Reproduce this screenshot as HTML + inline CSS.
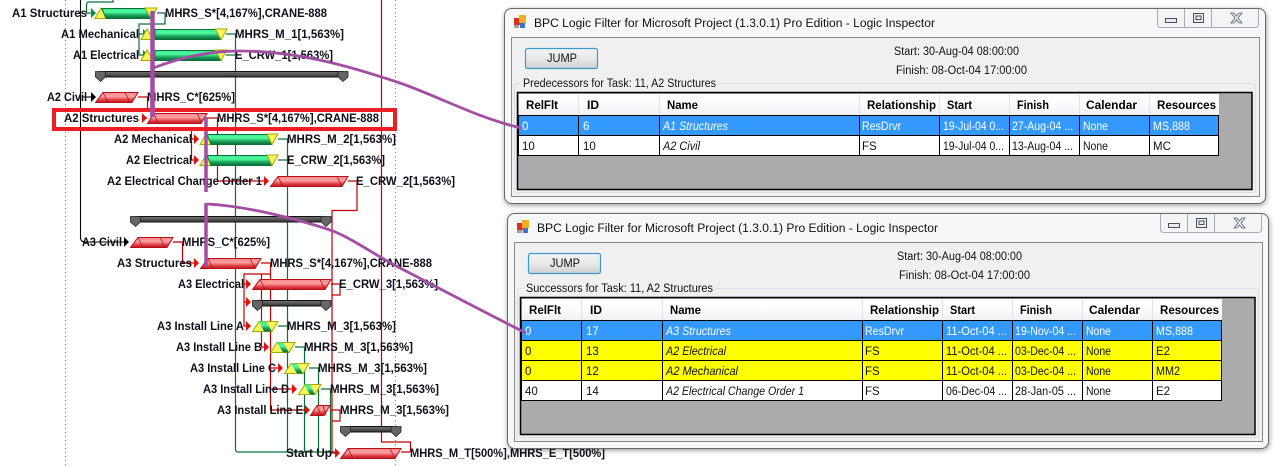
<!DOCTYPE html>
<html><head><meta charset="utf-8"><style>
html,body{margin:0;padding:0;background:#fff;width:1278px;height:467px;overflow:hidden}
svg{display:block}
.g{font:bold 11.5px "Liberation Sans",sans-serif;fill:#10101c}
.w{font:11.5px "Liberation Sans",sans-serif;fill:#111}
.h{font:bold 11.5px "Liberation Sans",sans-serif;fill:#000}
.i{font-style:italic}
.s{fill:#fff}
.rd{stroke:#c00000;fill:none;stroke-width:1.2}
.gr{stroke:#0b7038;fill:none;stroke-width:1.2}
.gb{fill:url(#gg);stroke:#0b7038;stroke-width:1}
.rb{fill:url(#rg);stroke:#b80f17;stroke-width:1}
.ln{fill:none;stroke:#b80f17;stroke-width:.8}
.yt{fill:#f6f65a;stroke:#a8a800;stroke-width:1}
.ra{fill:#e60d0d}
.ga{fill:#0b8a40}
.sb{fill:url(#sg);stroke:#111;stroke-width:1}
.sp{fill:#666;stroke:#222;stroke-width:.8}
.p{fill:none;stroke:#a34ea3}
</style></head><body>
<svg width="1278" height="467" viewBox="0 0 1278 467" xmlns="http://www.w3.org/2000/svg">
<defs>
<linearGradient id="gg" x1="0" y1="0" x2="0" y2="1"><stop offset="0" stop-color="#3fe890"/><stop offset=".35" stop-color="#4dfb9d"/><stop offset=".7" stop-color="#189a58"/><stop offset="1" stop-color="#0a6e38"/></linearGradient>
<linearGradient id="rg" x1="0" y1="0" x2="0" y2="1"><stop offset="0" stop-color="#f58a8c"/><stop offset=".4" stop-color="#fba0a2"/><stop offset=".75" stop-color="#dd3a40"/><stop offset="1" stop-color="#b81a20"/></linearGradient>
<linearGradient id="sg" x1="0" y1="0" x2="0" y2="1"><stop offset="0" stop-color="#777"/><stop offset="1" stop-color="#333"/></linearGradient>
<linearGradient id="hd" x1="0" y1="0" x2="0" y2="1"><stop offset="0" stop-color="#fff"/><stop offset=".5" stop-color="#fcfcfc"/><stop offset="1" stop-color="#eef0f2"/></linearGradient>
<linearGradient id="bt" x1="0" y1="0" x2="0" y2="1"><stop offset="0" stop-color="#f4f4f4"/><stop offset=".5" stop-color="#e8e8e8"/><stop offset="1" stop-color="#cfcfcf"/></linearGradient>
<filter id="sh" x="-3%" y="-8%" width="106%" height="116%"><feGaussianBlur stdDeviation="3"/></filter>
</defs>

<!-- dotted guides -->
<path d="M65.5 0V467M395.5 0V467" stroke="#888" stroke-width="1" stroke-dasharray="1 3" fill="none"/>

<!-- long connectors -->
<path d="M80.5 0V238Q81 242 85 242H128" fill="none" stroke="#000" stroke-width="1.1"/>
<path d="M83 97H92" fill="none" stroke="#000" stroke-width="1.1"/>
<path class="gr" d="M113 0V2H89Q86.500 2 86.500 5V13H92"/>
<path class="gr" d="M157 13H165V24H139V55H143M139 34H143"/>
<path class="gr" d="M226 34H235.500V449Q235.500 452 238 452H335M226 55H235.500"/>
<path class="gr" d="M278 139H287.500V452M278 160H287.500"/>
<path class="gr" d="M278 326H287M295 347H304.500V452M309 368H318.500V452M321 389H330.500V452"/>
<path class="rd" d="M138 97H147.500V108M147 118H143"/>
<path class="rd" d="M207 118H217.500V181H268M192 130H217M191.500 130V160H198M191.500 139H198"/>
<path class="rd" d="M348 181H357V210.500H332V453H336"/>
<path class="rd" d="M173 242H182.500V263H196"/>
<path class="rd" d="M261 263H270.500V410H306M270.500 274H244V326H249M244 284H249M244 302H249M261.500 274V347H267M270 368H280M270 389H294"/>
<path class="rd" d="M331 284H340V295H332M330 410H340V421H332"/>
<path class="rd" d="M381.500 0V442H410.500V452M401 452H410"/>

<!-- arrows -->
<path class="ga" d="M91 8l5 5-5 5zM143 29l5 5-5 5zM143 50l5 5-5 5z"/>
<path d="M91 92l5 5-5 5zM124 237l5 5-5 5z" fill="#000"/>
<path class="ra" d="M142 113l5 5-5 5zM194 134l5 5-5 5zM194 155l5 5-5 5zM264 176l5 5-5 5zM194 258l5 5-5 5zM246 279l5 5-5 5zM246 297l5 5-5 5zM246 321l5 5-5 5zM264 342l5 5-5 5zM278 363l5 5-5 5zM292 384l5 5-5 5zM305 405l5 5-5 5zM335 448l5 5-5 5z"/>

<!-- green bars -->
<g>
<polygon class="yt" points="95,18.500 101,8 107,18.500"/><polygon class="gb" points="102,8.500 147,8.500 151,18.500 106,18.500"/><polygon class="yt" points="145,8 157,8 151,18.500"/>
<polygon class="yt" points="141,39.500 147,29 153,39.500"/><polygon class="gb" points="155,29.500 216,29.500 221,39.500 155,39.500"/><polygon class="yt" points="215,29 227,29 221,39.500"/>
<polygon class="yt" points="141,60.500 147,50 153,60.500"/><polygon class="gb" points="155,50.500 216,50.500 221,60.500 155,60.500"/><polygon class="yt" points="215,50 227,50 221,60.500"/>
<polygon class="yt" points="200,144.500 206,134 212,144.500"/><polygon class="gb" points="207,134.500 268,134.500 272,144.500 211,144.500"/><polygon class="yt" points="267,134 278,134 272,144.500"/>
<polygon class="yt" points="200,165.500 206,155 212,165.500"/><polygon class="gb" points="207,155.500 268,155.500 272,165.500 211,165.500"/><polygon class="yt" points="267,155 278,155 272,165.500"/>
</g>

<!-- red bars -->
<g>
<polygon class="rb" points="95.500,102.500 103,92.500 138,92.500 132,102.500"/><path class="ln" d="M103 92.500L108 102.500M125 92.500L130 102.500"/>
<polygon class="rb" points="147.500,123.500 154,113.500 207,113.500 201,123.500"/><path class="ln" d="M154 113.500L158 123.500M197 113.500L202 123.500"/>
<polygon class="rb" points="270.500,186.500 278,176.500 348,176.500 342,186.500"/><path class="ln" d="M278 176.500L283 186.500M337 176.500L342 186.500"/>
<polygon class="rb" points="130.500,247.500 138,237.500 173,237.500 167,247.500"/><path class="ln" d="M138 237.500L143 247.500M160 237.500L165 247.500"/>
<polygon class="rb" points="200.500,268.500 208,258.500 261,258.500 255,268.500"/><path class="ln" d="M208 258.500L213 268.500M250 258.500L255 268.500"/>
<polygon class="rb" points="252.500,289.500 260,279.500 331,279.500 325,289.500"/><path class="ln" d="M260 279.500L265 289.500M320 279.500L325 289.500"/>
<polygon class="rb" points="310.500,415.500 317,405.500 330,405.500 324,415.500"/><path class="ln" d="M317 405.500L321 415.500M323 405.500L326 415.500"/>
<polygon class="rb" points="340.500,458.500 348,448.500 401,448.500 395,458.500"/><path class="ln" d="M348 448.500L353 458.500M390 448.500L395 458.500"/>
</g>

<!-- install bars -->
<g>
<polygon class="yt" points="252.500,331.500 259,321.500 278,321.500 272,331.500"/><polygon points="259,321.500 266,321.500 272,331.500 264,331.500" fill="url(#gg)"/>
<polygon class="yt" points="270.500,352.500 277,342.500 295,342.500 289,352.500"/><polygon points="277,342.500 283,342.500 289,352.500 283,352.500" fill="url(#gg)"/>
<polygon class="yt" points="284.500,373.500 291,363.500 309,363.500 303,373.500"/><polygon points="291,363.500 297,363.500 303,373.500 297,373.500" fill="url(#gg)"/>
<polygon class="yt" points="298.500,394.500 305,384.500 321,384.500 315,394.500"/><polygon points="304,384.500 310,384.500 315,394.500 310,394.500" fill="url(#gg)"/>
</g>

<!-- summary bars -->
<g>
<rect class="sb" x="100" y="71.500" width="243" height="5.500"/><polygon class="sp" points="95.500,71.500 105.500,71.500 105.500,77 100.500,81.500 95.500,77"/><polygon class="sp" points="338,71.500 348,71.500 348,77 343,81.500 338,77"/>
<rect class="sb" x="135" y="216.500" width="191" height="5.500"/><polygon class="sp" points="130.500,216.500 140.500,216.500 140.500,222 135.500,226.500 130.500,222"/><polygon class="sp" points="321,216.500 331,216.500 331,222 326,226.500 321,222"/>
<rect class="sb" x="257" y="300.500" width="69" height="5.500"/><polygon class="sp" points="252.500,300.500 262.500,300.500 262.500,306 257.500,310.500 252.500,306"/><polygon class="sp" points="321,300.500 331,300.500 331,306 326,310.500 321,306"/>
<rect class="sb" x="345" y="426.500" width="51" height="5.500"/><polygon class="sp" points="340.500,426.500 350.500,426.500 350.500,432 345.500,436.500 340.500,432"/><polygon class="sp" points="391,426.500 401,426.500 401,432 396,436.500 391,432"/>
</g>

<!-- gantt labels -->
<g class="g">
<text x="12" y="17" textLength="75" lengthAdjust="spacingAndGlyphs">A1 Structures</text>
<text x="165" y="17" textLength="162" lengthAdjust="spacingAndGlyphs">MHRS_S*[4,167%],CRANE-888</text>
<text x="61" y="38" textLength="78" lengthAdjust="spacingAndGlyphs">A1 Mechanical</text>
<text x="235" y="38" textLength="109" lengthAdjust="spacingAndGlyphs">MHRS_M_1[1,563%]</text>
<text x="73" y="59" textLength="66" lengthAdjust="spacingAndGlyphs">A1 Electrical</text>
<text x="235" y="59" textLength="98" lengthAdjust="spacingAndGlyphs">E_CRW_1[1,563%]</text>
<text x="47" y="101" textLength="40" lengthAdjust="spacingAndGlyphs">A2 Civil</text>
<text x="147" y="101" textLength="88" lengthAdjust="spacingAndGlyphs">MHRS_C*[625%]</text>
<text x="64" y="122" textLength="75" lengthAdjust="spacingAndGlyphs">A2 Structures</text>
<text x="217" y="122" textLength="162" lengthAdjust="spacingAndGlyphs">MHRS_S*[4,167%],CRANE-888</text>
<text x="114" y="143" textLength="78" lengthAdjust="spacingAndGlyphs">A2 Mechanical</text>
<text x="287" y="143" textLength="109" lengthAdjust="spacingAndGlyphs">MHRS_M_2[1,563%]</text>
<text x="126" y="164" textLength="66" lengthAdjust="spacingAndGlyphs">A2 Electrical</text>
<text x="287" y="164" textLength="98" lengthAdjust="spacingAndGlyphs">E_CRW_2[1,563%]</text>
<text x="107" y="185" textLength="155" lengthAdjust="spacingAndGlyphs">A2 Electrical Change Order 1</text>
<text x="356" y="185" textLength="99" lengthAdjust="spacingAndGlyphs">E_CRW_2[1,563%]</text>
<text x="82" y="246" textLength="40" lengthAdjust="spacingAndGlyphs">A3 Civil</text>
<text x="182" y="246" textLength="88" lengthAdjust="spacingAndGlyphs">MHRS_C*[625%]</text>
<text x="117" y="267" textLength="75" lengthAdjust="spacingAndGlyphs">A3 Structures</text>
<text x="270" y="267" textLength="162" lengthAdjust="spacingAndGlyphs">MHRS_S*[4,167%],CRANE-888</text>
<text x="178" y="288" textLength="66" lengthAdjust="spacingAndGlyphs">A3 Electrical</text>
<text x="339" y="288" textLength="99" lengthAdjust="spacingAndGlyphs">E_CRW_3[1,563%]</text>
<text x="157" y="330" textLength="87" lengthAdjust="spacingAndGlyphs">A3 Install Line A</text>
<text x="287" y="330" textLength="109" lengthAdjust="spacingAndGlyphs">MHRS_M_3[1,563%]</text>
<text x="176" y="351" textLength="86" lengthAdjust="spacingAndGlyphs">A3 Install Line B</text>
<text x="304" y="351" textLength="109" lengthAdjust="spacingAndGlyphs">MHRS_M_3[1,563%]</text>
<text x="190" y="372" textLength="86" lengthAdjust="spacingAndGlyphs">A3 Install Line C</text>
<text x="318" y="372" textLength="109" lengthAdjust="spacingAndGlyphs">MHRS_M_3[1,563%]</text>
<text x="203" y="393" textLength="86" lengthAdjust="spacingAndGlyphs">A3 Install Line D</text>
<text x="330" y="393" textLength="109" lengthAdjust="spacingAndGlyphs">MHRS_M_3[1,563%]</text>
<text x="217" y="414" textLength="86" lengthAdjust="spacingAndGlyphs">A3 Install Line E</text>
<text x="340" y="414" textLength="109" lengthAdjust="spacingAndGlyphs">MHRS_M_3[1,563%]</text>
<text x="286" y="457" textLength="46" lengthAdjust="spacingAndGlyphs">Start Up</text>
<text x="410" y="457" textLength="195" lengthAdjust="spacingAndGlyphs">MHRS_M_T[500%],MHRS_E_T[500%]</text>
</g>

<!-- purple over gantt -->
<path class="p" stroke-width="4.500" d="M152.500 11V117"/>
<path class="p" stroke-width="3.500" d="M206 117V192M206 203V267"/>

<!-- red highlight -->
<rect x="54" y="110" width="341" height="19" fill="none" stroke="#ee1c25" stroke-width="4"/>
<path class="p" stroke-width="4.500" d="M152.500 100V117"/>

<!-- window 1 -->
<rect x="505" y="10" width="761" height="195" rx="7" fill="#000" opacity=".45" filter="url(#sh)"/>
<rect x="504.500" y="8.500" width="761" height="195" rx="7" fill="#f5f7f9" stroke="#6a6a6a"/>
<rect x="511.500" y="37.500" width="748" height="159" fill="#f0f0f0" stroke="#8a8a8a"/>
<g>
<rect x="514" y="18" width="6" height="7" fill="#d83020"/><rect x="519" y="15" width="7" height="8" fill="#f0b020"/><rect x="520" y="23" width="5" height="5" fill="#4070d0"/><rect x="514" y="25" width="5" height="3" fill="#a0a0a0"/>
<text class="w" x="534" y="27" textLength="401" lengthAdjust="spacingAndGlyphs">BPC Logic Filter for Microsoft Project  (1.3.0.1)  Pro Edition - Logic Inspector</text>
<path d="M1157.500 9V24Q1157.500 27.500 1161 27.500H1255Q1258.500 27.500 1258.500 24V9" fill="#f2f4f6" stroke="#a8acb0"/>
<path d="M1184.500 9V27.500M1211.500 9V27.500" fill="none" stroke="#a8acb0"/>
<rect x="1165.500" y="18.500" width="11" height="4" fill="#e8eaf0" stroke="#4a5260"/>
<rect x="1193.500" y="13.500" width="10" height="9" fill="#e8eaf0" stroke="#4a5260"/><rect x="1196" y="16" width="5" height="3.500" fill="none" stroke="#4a5260"/>
<path d="M1231 13h3l2.500 3 2.500-3h3l-4 5 4 5h-3l-2.500-3-2.500 3h-3l4-5z" fill="#e4e8ec" stroke="#5a6270" stroke-width=".8"/>
<rect x="525.500" y="48.500" width="72" height="20" rx="2" fill="url(#bt)" stroke="#3a9ad0" stroke-width="1.200"/>
<text class="w" x="547" y="62" textLength="30" lengthAdjust="spacingAndGlyphs">JUMP</text>
<text class="w" x="894" y="55" textLength="125" lengthAdjust="spacingAndGlyphs">Start: 30-Aug-04 08:00:00</text>
<text class="w" x="896" y="74" textLength="131" lengthAdjust="spacingAndGlyphs">Finish: 08-Oct-04 17:00:00</text>
<rect x="514.500" y="83.500" width="741" height="109" rx="2" fill="none" stroke="#dce0e6"/>
<rect x="520" y="77" width="198" height="12" fill="#f0f0f0"/>
<text class="w" x="523" y="87" textLength="193" lengthAdjust="spacingAndGlyphs">Predecessors for Task: 11, A2 Structures</text>
<rect x="517.500" y="92.500" width="734.500" height="97" fill="#ababab" stroke="#000" stroke-width="1.500"/>
<rect x="519" y="94" width="700" height="21" fill="url(#hd)"/>
<path d="M578.500 94V115M659.500 94V115M859.500 94V115M939.500 94V115M1009.500 94V115M1079.500 94V115M1149.500 94V115" stroke="#dfe2e6" fill="none"/>
<rect x="519" y="115" width="700" height="20" fill="#3399ff"/>
<rect x="519" y="135" width="700" height="20" fill="#fff"/>
<path d="M518.500 115.500H1218.500V155.500H518.500ZM518.500 135.500H1218.500M578.500 115V155M659.500 115V155M859.500 115V155M939.500 115V155M1009.500 115V155M1079.500 115V155M1149.500 115V155" stroke="#000" fill="none"/>
<g class="h">
<text x="526" y="109" textLength="32" lengthAdjust="spacingAndGlyphs">RelFlt</text><text x="587" y="109" textLength="12" lengthAdjust="spacingAndGlyphs">ID</text><text x="667" y="109" textLength="31" lengthAdjust="spacingAndGlyphs">Name</text><text x="867" y="109" textLength="69" lengthAdjust="spacingAndGlyphs">Relationship</text><text x="947" y="109" textLength="25" lengthAdjust="spacingAndGlyphs">Start</text><text x="1017" y="109" textLength="32" lengthAdjust="spacingAndGlyphs">Finish</text><text x="1086" y="109" textLength="51" lengthAdjust="spacingAndGlyphs">Calendar</text><text x="1157" y="109" textLength="59" lengthAdjust="spacingAndGlyphs">Resources</text>
</g>
<g class="w">
<text class="w s" x="522" y="130">0</text><text class="w s" x="583" y="130">6</text><text class="w s i" x="663" y="130" textLength="65" lengthAdjust="spacingAndGlyphs">A1 Structures</text><text class="w s" x="862" y="130" textLength="39" lengthAdjust="spacingAndGlyphs">ResDrvr</text><text class="w s" x="943" y="130" textLength="61" lengthAdjust="spacingAndGlyphs">19-Jul-04 0...</text><text class="w s" x="1012" y="130" textLength="61" lengthAdjust="spacingAndGlyphs">27-Aug-04 ...</text><text class="w s" x="1083" y="130" textLength="25" lengthAdjust="spacingAndGlyphs">None</text><text class="w s" x="1153" y="130" textLength="37" lengthAdjust="spacingAndGlyphs">MS,888</text>
<text class="w" x="522" y="150">10</text><text class="w" x="583" y="150">10</text><text class="w i" x="663" y="150" textLength="37" lengthAdjust="spacingAndGlyphs">A2 Civil</text><text class="w" x="862" y="150">FS</text><text class="w" x="943" y="150" textLength="61" lengthAdjust="spacingAndGlyphs">19-Jul-04 0...</text><text class="w" x="1012" y="150" textLength="61" lengthAdjust="spacingAndGlyphs">13-Aug-04 ...</text><text class="w" x="1083" y="150" textLength="25" lengthAdjust="spacingAndGlyphs">None</text><text class="w" x="1153" y="150">MC</text>
</g>
</g>

<!-- window 2 -->
<rect x="508" y="215" width="761" height="235" rx="7" fill="#000" opacity=".45" filter="url(#sh)"/>
<rect x="507.500" y="213.500" width="761" height="235" rx="7" fill="#f5f7f9" stroke="#6a6a6a"/>
<rect x="514.500" y="242.500" width="748" height="199" fill="#f0f0f0" stroke="#8a8a8a"/>
<g transform="translate(3,205)">
<rect x="514" y="18" width="6" height="7" fill="#d83020"/><rect x="519" y="15" width="7" height="8" fill="#f0b020"/><rect x="520" y="23" width="5" height="5" fill="#4070d0"/><rect x="514" y="25" width="5" height="3" fill="#a0a0a0"/>
<text class="w" x="534" y="27" textLength="401" lengthAdjust="spacingAndGlyphs">BPC Logic Filter for Microsoft Project  (1.3.0.1)  Pro Edition - Logic Inspector</text>
<path d="M1157.500 9V24Q1157.500 27.500 1161 27.500H1255Q1258.500 27.500 1258.500 24V9" fill="#f2f4f6" stroke="#a8acb0"/>
<path d="M1184.500 9V27.500M1211.500 9V27.500" fill="none" stroke="#a8acb0"/>
<rect x="1165.500" y="18.500" width="11" height="4" fill="#e8eaf0" stroke="#4a5260"/>
<rect x="1193.500" y="13.500" width="10" height="9" fill="#e8eaf0" stroke="#4a5260"/><rect x="1196" y="16" width="5" height="3.500" fill="none" stroke="#4a5260"/>
<path d="M1231 13h3l2.500 3 2.500-3h3l-4 5 4 5h-3l-2.500-3-2.500 3h-3l4-5z" fill="#e4e8ec" stroke="#5a6270" stroke-width=".8"/>
<rect x="525.500" y="48.500" width="72" height="20" rx="2" fill="url(#bt)" stroke="#3a9ad0" stroke-width="1.200"/>
<text class="w" x="547" y="62" textLength="30" lengthAdjust="spacingAndGlyphs">JUMP</text>
<text class="w" x="894" y="55" textLength="125" lengthAdjust="spacingAndGlyphs">Start: 30-Aug-04 08:00:00</text>
<text class="w" x="896" y="74" textLength="131" lengthAdjust="spacingAndGlyphs">Finish: 08-Oct-04 17:00:00</text>
<rect x="514.500" y="83.500" width="741" height="149" rx="2" fill="none" stroke="#dce0e6"/>
<rect x="520" y="77" width="192" height="12" fill="#f0f0f0"/>
<text class="w" x="523" y="87" textLength="187" lengthAdjust="spacingAndGlyphs">Successors for Task: 11, A2 Structures</text>
<rect x="517.500" y="92.500" width="734.500" height="137" fill="#ababab" stroke="#000" stroke-width="1.500"/>
<rect x="519" y="94" width="700" height="21" fill="url(#hd)"/>
<path d="M578.500 94V115M659.500 94V115M859.500 94V115M939.500 94V115M1009.500 94V115M1079.500 94V115M1149.500 94V115" stroke="#dfe2e6" fill="none"/>
<rect x="519" y="115" width="700" height="20" fill="#3399ff"/>
<rect x="519" y="135" width="700" height="40" fill="#ffff00"/>
<rect x="519" y="175" width="700" height="20" fill="#fff"/>
<path d="M518.500 115.500H1218.500V195.500H518.500ZM518.500 135.500H1218.500M518.500 155.500H1218.500M518.500 175.500H1218.500M578.500 115V195M659.500 115V195M859.500 115V195M939.500 115V195M1009.500 115V195M1079.500 115V195M1149.500 115V195" stroke="#000" fill="none"/>
<g class="h">
<text x="526" y="109" textLength="32" lengthAdjust="spacingAndGlyphs">RelFlt</text><text x="587" y="109" textLength="12" lengthAdjust="spacingAndGlyphs">ID</text><text x="667" y="109" textLength="31" lengthAdjust="spacingAndGlyphs">Name</text><text x="867" y="109" textLength="69" lengthAdjust="spacingAndGlyphs">Relationship</text><text x="947" y="109" textLength="25" lengthAdjust="spacingAndGlyphs">Start</text><text x="1017" y="109" textLength="32" lengthAdjust="spacingAndGlyphs">Finish</text><text x="1086" y="109" textLength="51" lengthAdjust="spacingAndGlyphs">Calendar</text><text x="1157" y="109" textLength="59" lengthAdjust="spacingAndGlyphs">Resources</text>
</g>
<text class="w s" x="522" y="130">0</text><text class="w s" x="583" y="130">17</text><text class="w s i" x="663" y="130" textLength="65" lengthAdjust="spacingAndGlyphs">A3 Structures</text><text class="w s" x="862" y="130" textLength="39" lengthAdjust="spacingAndGlyphs">ResDrvr</text><text class="w s" x="943" y="130" textLength="61" lengthAdjust="spacingAndGlyphs">11-Oct-04 ...</text><text class="w s" x="1012" y="130" textLength="61" lengthAdjust="spacingAndGlyphs">19-Nov-04 ...</text><text class="w s" x="1083" y="130" textLength="25" lengthAdjust="spacingAndGlyphs">None</text><text class="w s" x="1153" y="130" textLength="37" lengthAdjust="spacingAndGlyphs">MS,888</text>
<text class="w" x="522" y="150">0</text><text class="w" x="583" y="150">13</text><text class="w i" x="663" y="150" textLength="60" lengthAdjust="spacingAndGlyphs">A2 Electrical</text><text class="w" x="862" y="150">FS</text><text class="w" x="943" y="150" textLength="61" lengthAdjust="spacingAndGlyphs">11-Oct-04 ...</text><text class="w" x="1012" y="150" textLength="61" lengthAdjust="spacingAndGlyphs">03-Dec-04 ...</text><text class="w" x="1083" y="150" textLength="25" lengthAdjust="spacingAndGlyphs">None</text><text class="w" x="1153" y="150">E2</text>
<text class="w" x="522" y="170">0</text><text class="w" x="583" y="170">12</text><text class="w i" x="663" y="170" textLength="72" lengthAdjust="spacingAndGlyphs">A2 Mechanical</text><text class="w" x="862" y="170">FS</text><text class="w" x="943" y="170" textLength="61" lengthAdjust="spacingAndGlyphs">11-Oct-04 ...</text><text class="w" x="1012" y="170" textLength="61" lengthAdjust="spacingAndGlyphs">03-Dec-04 ...</text><text class="w" x="1083" y="170" textLength="25" lengthAdjust="spacingAndGlyphs">None</text><text class="w" x="1153" y="170" textLength="24" lengthAdjust="spacingAndGlyphs">MM2</text>
<text class="w" x="522" y="190">40</text><text class="w" x="583" y="190">14</text><text class="w i" x="663" y="190" textLength="138" lengthAdjust="spacingAndGlyphs">A2 Electrical Change Order 1</text><text class="w" x="862" y="190">FS</text><text class="w" x="943" y="190" textLength="61" lengthAdjust="spacingAndGlyphs">06-Dec-04 ...</text><text class="w" x="1012" y="190" textLength="61" lengthAdjust="spacingAndGlyphs">28-Jan-05 ...</text><text class="w" x="1083" y="190" textLength="25" lengthAdjust="spacingAndGlyphs">None</text><text class="w" x="1153" y="190">E2</text>
</g>

<!-- purple curves on top -->
<path class="p" stroke-width="2.800" d="M153 68C185 56 212 51 240 51C300 51 355 68 400 83C440 97 475 117 521 128"/>
<path class="p" stroke-width="2.800" d="M207 204C245 206 295 218 333 231C355 240 378 257 400 268C435 286 480 310 526 333"/>
</svg>
</body></html>
